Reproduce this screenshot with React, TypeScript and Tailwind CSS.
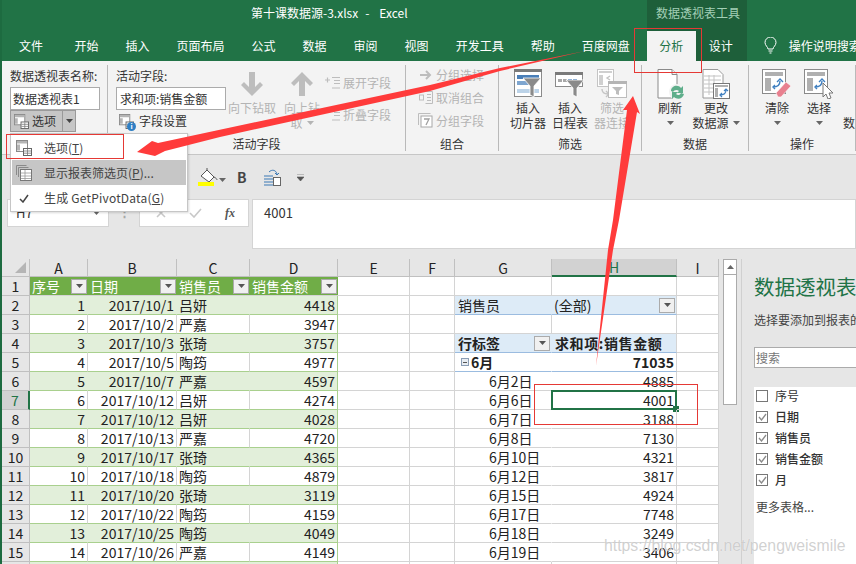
import React from "react";

const FONT = "[font-family:'Noto_Sans_CJK_SC','Noto_Sans',sans-serif]";

const TABS = ["开始", "插入", "页面布局", "公式", "数据", "审阅", "视图", "开发工具", "帮助", "百度网盘"];

const COLS = [
  { name: "A", w: "w-[58px]" },
  { name: "B", w: "w-[89px]" },
  { name: "C", w: "w-[73px]" },
  { name: "D", w: "w-[88px]" },
  { name: "E", w: "w-[72px]" },
  { name: "F", w: "w-[45px]" },
  { name: "G", w: "w-[97px]" },
  { name: "H", w: "w-[125px]" },
  { name: "I", w: "w-[42px]" },
];

const SALES: [string, string, string, string][] = [
  ["1", "2017/10/1", "吕妍", "4418"],
  ["2", "2017/10/2", "严嘉", "3947"],
  ["3", "2017/10/3", "张琦", "3757"],
  ["4", "2017/10/5", "陶筠", "4977"],
  ["5", "2017/10/7", "严嘉", "4597"],
  ["6", "2017/10/12", "吕妍", "4274"],
  ["7", "2017/10/12", "吕妍", "4028"],
  ["8", "2017/10/13", "严嘉", "4720"],
  ["9", "2017/10/17", "张琦", "4365"],
  ["10", "2017/10/18", "陶筠", "4879"],
  ["11", "2017/10/20", "张琦", "3119"],
  ["12", "2017/10/22", "陶筠", "4159"],
  ["13", "2017/10/25", "陶筠", "4049"],
  ["14", "2017/10/26", "严嘉", "4149"],
];

const PIVOT: [string, string][] = [
  ["6月2日", "4885"],
  ["6月6日", "4001"],
  ["6月7日", "3188"],
  ["6月8日", "7130"],
  ["6月10日", "4321"],
  ["6月12日", "3817"],
  ["6月15日", "4924"],
  ["6月17日", "7748"],
  ["6月18日", "3249"],
  ["6月19日", "3406"],
];

const FIELDS = [
  { name: "序号", on: false },
  { name: "日期", on: true },
  { name: "销售员", on: true },
  { name: "销售金额", on: true },
  { name: "月", on: true },
];

function TableIcon({ size = 16 }: { size?: number }) {
  return (
    <svg width={size} height={size} viewBox="0 0 16 16" className="shrink-0">
      <rect x="0.5" y="0.5" width="11" height="11" fill="#fff" stroke="#8a8a8a" />
      <path d="M1 1h10v2.5H1zM1 4.5h3v6H1z" fill="#b5b5b5" />
      <rect x="7.5" y="8.5" width="8" height="7" fill="#fff" stroke="#666" />
      <path d="M8 11h7M8 13.2h7M11.5 9v6" stroke="#777" strokeWidth="0.8" />
    </svg>
  );
}

function PagesIcon() {
  return (
    <svg width="16" height="16" viewBox="0 0 16 16" className="shrink-0">
      <path d="M.5 10V.5h10M2.500 12V2.500h10" fill="none" stroke="#8a8a8a" />
      <rect x="4.500" y="4.500" width="11" height="11" fill="#fff" stroke="#777" />
      <path d="M5 8h10M5 11h10M5 13.500h10M9 5v10" stroke="#999" strokeWidth="0.8" />
    </svg>
  );
}

function ArrowIcon({ up }: { up?: boolean }) {
  return (
    <svg width="24" height="26" viewBox="0 0 24 26">
      <path
        d={up ? "M12 1 23 12l-3 3-5-5v15H9V10l-5 5-3-3z" : "M12 25 23 14l-3-3-5 5V1H9v15l-5-5-3 3z"}
        fill="#bdbdbd"
      />
    </svg>
  );
}

function SlicerIcon() {
  return (
    <svg width="28" height="30" viewBox="0 0 28 30">
      <rect x="0.5" y="1.5" width="27" height="26" fill="#fff" stroke="#8a8a8a" />
      <rect x="0" y="0" width="28" height="3" fill="#7a7a7a" />
      <rect x="3" y="6" width="22" height="4" fill="#4a7fb8" />
      <rect x="3" y="12" width="13" height="4" fill="#7ea6d0" />
      <rect x="3" y="20" width="22" height="4" fill="#bcd3e8" />
      <path d="M9 9h18l-7 8v11l-4-2v-9z" fill="#8a8a8a" stroke="#fff" strokeWidth="0.8" />
    </svg>
  );
}

function TimelineIcon() {
  return (
    <svg width="30" height="30" viewBox="0 0 30 30">
      <rect x="0.5" y="3.5" width="27" height="14" fill="#fff" stroke="#8a8a8a" />
      <rect x="0" y="3" width="28" height="3" fill="#7a7a7a" />
      <rect x="3" y="10" width="4" height="3" fill="#a8a8a8" />
      <rect x="8" y="10" width="4" height="3" fill="#a8a8a8" />
      <rect x="13" y="10" width="4" height="3" fill="#4a7fb8" />
      <rect x="18" y="10" width="4" height="3" fill="#4a7fb8" />
      <path d="M11 11h18l-7 8v9l-4-2v-7z" fill="#8a8a8a" stroke="#fff" strokeWidth="0.8" />
    </svg>
  );
}

function ConnectionsIcon() {
  return (
    <svg width="30" height="30" viewBox="0 0 30 30">
      <rect x="0.5" y="0.5" width="16" height="17" fill="#fff" stroke="#c4c4c4" />
      <path d="M2 2h13v2H2zM2 6h4v10H2z" fill="#d0d0d0" />
      <path d="M13 7l-3 2 3 2M5 20c0 4 3 5 6 5M9 22l3 3-3 3" fill="none" stroke="#c4c4c4" strokeWidth="1.4" />
      <rect x="11.5" y="12.5" width="18" height="16" fill="#fff" stroke="#bdbdbd" />
      <rect x="11" y="12" width="19" height="3" fill="#b5b5b5" />
      <path d="M15 18h11l-4 4v4l-3-1v-3z" fill="#bdbdbd" />
    </svg>
  );
}

function RefreshIcon() {
  return (
    <svg width="30" height="32" viewBox="0 0 30 32">
      <path d="M3 1.500h14l5 5V30H3z" fill="#fff" stroke="#8a8a8a" />
      <path d="M17 1.500v5h5" fill="#f3f3f3" stroke="#8a8a8a" />
      <circle cx="22" cy="24" r="8" fill="#f3f3f3" />
      <path d="M16 23c0-5 7-7 10-3l2-2v7h-6l2-2c-2-2-5-1-6 1z" fill="#5fae8b" />
      <path d="M29 26c-1 5-7 6-10 3l-2 2v-7h6l-2 2c2 2 4 1 5-1z" fill="#5fae8b" />
    </svg>
  );
}

function SourceIcon() {
  return (
    <svg width="28" height="30" viewBox="0 0 28 30">
      <path d="M1 0.5h15l5 5V29H1z" fill="#fff" stroke="#9a9a9a" />
      <path d="M2 7h17M2 11h17M2 15h17M2 19h17M2 23h17M7 6v20M12 6v20" stroke="#c4c4c4" strokeWidth="1" />
      <rect x="11.5" y="14.5" width="16" height="15" fill="#fff" stroke="#777" />
      <path d="M13 16h13v2H13zM13 19h3v9h-3z" fill="#b0b0b0" />
      <path d="M18 26c4 0 6-2 6-5M22 22l2-2 2 2M20 24l-2 2 2 2" fill="none" stroke="#3f7fc0" strokeWidth="1.2" />
    </svg>
  );
}

function PivotArrowTable() {
  return (
    <>
      <rect x="0.5" y="0.5" width="23" height="24" fill="#fff" stroke="#8a8a8a" />
      <path d="M3 3h18v4H3zM3 9h6v13H3z" fill="#b0b0b0" />
      <path d="M11 18c5 0 7-3 7-6M15 13l3-3 3 3M13 16l-2 2 2 2" fill="none" stroke="#3f7fc0" strokeWidth="1.4" />
    </>
  );
}

function ClearIcon() {
  return (
    <svg width="30" height="30" viewBox="0 0 30 30">
      <PivotArrowTable />
      <path d="M14 24l10-11 5 4-10 11h-3z" fill="#e8808f" stroke="#fff" strokeWidth="0.6" />
    </svg>
  );
}

function SelectIcon() {
  return (
    <svg width="30" height="30" viewBox="0 0 30 30">
      <PivotArrowTable />
      <path d="M19 14v14l3-3 2 5 3-1-2-5h4z" fill="#fff" stroke="#777" strokeWidth="1" />
    </svg>
  );
}

function Caret({ color = "#666" }: { color?: string }) {
  return (
    <svg width="7" height="4" viewBox="0 0 7 4" className="inline-block shrink-0">
      <path d="M0 0h7L3.5 4z" fill={color} />
    </svg>
  );
}

function FilterButton() {
  return (
    <span className="flex h-[15px] w-[16px] shrink-0 items-center justify-center border border-[#ababab] bg-[#f0f0f0]">
      <Caret color="#555" />
    </span>
  );
}

function Group({ title, w, children }: { title: string; w: string; children: React.ReactNode }) {
  return (
    <div className={`flex h-[86px] shrink-0 flex-col border-r border-[#b9b9b9] ${w}`}>
      <div className="flex min-h-0 flex-1">{children}</div>
      <div className="h-[14px] text-center text-[12px] leading-[14px] whitespace-nowrap text-[#333]">{title}</div>
    </div>
  );
}

function BigButton({
  icon,
  lines,
  w,
  caret,
  disabled,
}: {
  icon: React.ReactNode;
  lines: React.ReactNode[];
  w: string;
  caret?: boolean;
  disabled?: boolean;
}) {
  return (
    <div className={`flex shrink-0 flex-col items-center ${w} ${disabled ? "text-[#b4b4b4]" : "text-[#333]"}`}>
      <div className="mt-[2px] flex h-[33px] items-center justify-center">{icon}</div>
      {lines.map((line, i) => (
        <div key={i} className="flex h-[15px] items-center gap-1 text-[12px] leading-[15px] whitespace-nowrap">
          {line}
        </div>
      ))}
      {caret && (
        <div className="flex h-[15px] items-center">
          <Caret />
        </div>
      )}
    </div>
  );
}

function SmallRow({ icon, label }: { icon: React.ReactNode; label: string }) {
  return (
    <div className="flex h-[23px] items-center gap-[3px] text-[12px] whitespace-nowrap text-[#b4b4b4]">
      <span className="flex w-[15px] justify-center">{icon}</span>
      {label}
    </div>
  );
}

function Ribbon() {
  return (
    <div className="flex h-[94px] items-start border-b border-[#c6c6c6] bg-[#f3f3f3] py-[4px]">
      <Group title="" w="w-[106px]">
        <div className="pl-[8px]">
          <div className="mt-[3px] text-[12px] leading-[15px] whitespace-nowrap text-[#333]">数据透视表名称:</div>
          <div className="mt-[4px] h-[23px] w-[90px] border border-[#ababab] bg-white pl-[2px] text-[12px] leading-[21px] text-[#333]">
            数据透视表1
          </div>
          <div className="flex">
            <div className="flex h-[22px] w-[53px] items-center gap-[3px] border border-[#9a9a9a] bg-[#c6c6c6] pl-[3px] text-[12px] text-[#333]">
              <TableIcon size={15} />
              选项
            </div>
            <div className="flex h-[22px] w-[13px] items-center justify-center border border-l-0 border-[#9a9a9a] bg-[#c6c6c6]">
              <Caret color="#444" />
            </div>
          </div>
        </div>
      </Group>
      <Group title="活动字段" w="w-[298px]">
        <div className="w-[118px] shrink-0 pl-[8px]">
          <div className="mt-[3px] text-[12px] leading-[15px] text-[#333]">活动字段:</div>
          <div className="mt-[4px] h-[23px] w-[110px] border border-[#ababab] bg-white pl-[3px] text-[12px] leading-[21px] whitespace-nowrap text-[#333]">
            求和项:销售金额
          </div>
          <div className="mt-[2px] flex items-center gap-[5px] pl-[3px] text-[12px] text-[#333]">
            <span className="relative">
              <TableIcon size={15} />
              <span className="absolute -right-[2px] -bottom-[2px] h-[9px] w-[9px] rounded-full bg-[#2f7fc4] text-center text-[7px] leading-[9px] font-bold text-white">
                i
              </span>
            </span>
            字段设置
          </div>
        </div>
        <BigButton w="w-[52px]" disabled icon={<ArrowIcon />} lines={["向下钻取"]} />
        <BigButton
          w="w-[48px]"
          disabled
          icon={<ArrowIcon up />}
          lines={["向上钻", <>取<Caret color="#b4b4b4" /></>]}
        />
        <div className="-ml-[1px] flex flex-col gap-[9px] pt-[6px]">
          <SmallRow
            label="展开字段"
            icon={
              <svg width="15" height="12" viewBox="0 0 15 12">
                <path d="M0 3h5M2.5 .5v5M7 .5h8M9 3.5h6M9 6.5h6M7 11h8" stroke="#bdbdbd" strokeWidth="1.2" />
              </svg>
            }
          />
          <SmallRow
            label="折叠字段"
            icon={
              <svg width="15" height="12" viewBox="0 0 15 12">
                <path d="M7 .5h8M9 3.5h6M9 6.5h6M7 11h8" stroke="#bdbdbd" strokeWidth="1.2" />
              </svg>
            }
          />
        </div>
      </Group>
      <Group title="组合" w="w-[93px]">
        <div className="-mt-[2px] pl-[12px]">
          <SmallRow
            label="分组选择"
            icon={
              <svg width="12" height="10" viewBox="0 0 12 10">
                <path d="M0 5h10M6 1l4 4-4 4" fill="none" stroke="#bdbdbd" strokeWidth="2" />
              </svg>
            }
          />
          <SmallRow
            label="取消组合"
            icon={
              <svg width="14" height="13" viewBox="0 0 14 13">
                <path d="M6.500.5h7v12h-7M8 3.500h4M8 6.500h4M8 9.500h4" fill="none" stroke="#bdbdbd" />
                <rect x="0.500" y="4" width="4" height="5" fill="none" stroke="#bdbdbd" />
              </svg>
            }
          />
          <SmallRow
            label="分组字段"
            icon={
              <svg width="15" height="15" viewBox="0 0 15 15">
                <path d="M.5 12V.5h12" fill="none" stroke="#bdbdbd" />
                <rect x="3" y="3" width="11" height="11" fill="#fff" stroke="#a8a8a8" />
                <path d="M6 6h5L8 12" fill="none" stroke="#a0a0a0" strokeWidth="1.3" />
              </svg>
            }
          />
        </div>
      </Group>
      <Group title="筛选" w="w-[143px]">
        <BigButton w="w-[42px] ml-[8px]" icon={<SlicerIcon />} lines={["插入", "切片器"]} />
        <BigButton w="w-[42px]" icon={<TimelineIcon />} lines={["插入", "日程表"]} />
        <BigButton w="w-[42px]" disabled icon={<ConnectionsIcon />} lines={["筛选", "器连接"]} />
      </Group>
      <Group title="数据" w="w-[107px]">
        <BigButton w="w-[36px] ml-[10px]" icon={<RefreshIcon />} lines={["刷新"]} caret />
        <BigButton w="w-[56px]" icon={<SourceIcon />} lines={["更改", <>数据源<Caret /></>]} />
      </Group>
      <Group title="操作" w="w-[107px]">
        <BigButton w="w-[42px] ml-[7px]" icon={<ClearIcon />} lines={["清除"]} caret />
        <BigButton w="w-[42px]" icon={<SelectIcon />} lines={["选择"]} caret />
        <div className="mt-[50px] ml-[3px] text-[12px] leading-[15px] whitespace-nowrap text-[#333]">数</div>
      </Group>
    </div>
  );
}

function Toolbars() {
  return (
    <div className="h-[104px] bg-[#e6e6e6]">
      <div className="flex h-[44px] items-center pl-[196px]">
        <svg width="24" height="20" viewBox="0 0 24 20">
          <path d="M3 9 9 3l7 7-5 5z" fill="#fff" stroke="#555" />
          <path d="M9 3V1M16 10c2 1 3 2 3 3" stroke="#555" fill="none" />
          <rect x="0" y="15" width="16" height="4" fill="#ffff00" />
        </svg>
        <span className="-ml-[3px]"><Caret /></span>
        <span className="ml-[11px] text-[14px] leading-[16px] font-bold text-[#444]">B</span>
        <svg width="18" height="18" viewBox="0 0 18 18" className="ml-[16px]">
          <path d="M1 8h9M1 11h9M1 14h9M1 17h9" stroke="#3a78b5" />
          <path d="M6 4c3-3 7-2 8 2M12 5l2 2 2-2" fill="none" stroke="#3a78b5" />
          <rect x="10.500" y="9.500" width="7" height="8" fill="#fff" stroke="#666" />
        </svg>
        <svg width="7" height="7" viewBox="0 0 7 7" className="ml-[16px]">
          <path d="M0 0h7M0 3h7L3.500 7z" fill="#555" stroke="#555" strokeWidth="0.6" />
        </svg>
      </div>
      <div className="flex items-start pl-[5px]">
        <div className="flex h-[28px] w-[102px] items-center justify-between border border-[#d4d4d4] bg-white px-[8px] text-[13px] text-[#333]">
          H7
          <Caret />
        </div>
        <div className="w-[30px] pt-[4px] text-center text-[13px] leading-[16px] font-bold text-[#a8a8a8]">⋮</div>
        <div className="flex h-[28px] w-[110px] items-center justify-between border border-[#d4d4d4] bg-white pr-[13px] pl-[16px] text-[#bdbdbd]">
          <svg width="10" height="10" viewBox="0 0 10 10">
            <path d="M1 1l8 8M9 1l-8 8" stroke="#c8c8c8" strokeWidth="1.6" />
          </svg>
          <svg width="13" height="10" viewBox="0 0 13 10">
            <path d="M1 5l4 4 7-8" fill="none" stroke="#c8c8c8" strokeWidth="1.6" />
          </svg>
          <span className="font-['Liberation_Serif',serif] text-[12px] font-bold text-[#555] italic">fx</span>
        </div>
        <div className="ml-[3px] h-[50px] flex-1 border border-[#d4d4d4] bg-white pt-[3px] pl-[11px] text-[13px] text-[#333]">4001</div>
      </div>
    </div>
  );
}

function Cell({ w, className = "", children }: { w: string; className?: string; children?: React.ReactNode }) {
  return (
    <div
      className={`relative flex h-[19px] shrink-0 items-center border-r border-b border-[#d4d4d4] px-[2px] text-[14px] leading-[18px] whitespace-nowrap text-[#222] ${w} ${className}`}
    >
      {children}
    </div>
  );
}

function Row({ index }: { index: number }) {
  const sale = index >= 2 && index <= 15 ? SALES[index - 2] : null;
  const pivot = index >= 6 && index <= 15 ? PIVOT[index - 6] : null;
  const inner =
    index % 2 === 0
      ? "border-b-[#a9d08e] border-r-[#e2efda] bg-[#e2efda]"
      : "border-b-[#a9d08e] border-r-[#d4d4d4]";
  const last = index % 2 === 0 ? "border-b-[#a9d08e] border-r-[#a9d08e] bg-[#e2efda]" : "border-b-[#a9d08e] border-r-[#a9d08e]";
  const selected = index === 7;

  return (
    <div className="flex">
      <div
        className={`flex h-[19px] w-[28px] shrink-0 items-center justify-center border-r border-b border-[#c0c0c0] text-[14px] leading-[18px] text-[#222] ${
          selected ? "border-r-2 border-r-[#217346] bg-[#d2d2d2] text-[#217346]" : "bg-[#e6e6e6]"
        }`}
      >
        {index}
      </div>
      {index === 1 ? (
        <>
          <Cell w="w-[58px]" className="justify-between border-r-0 bg-[#70ad47] pr-[1px] text-white">序号<FilterButton /></Cell>
          <Cell w="w-[89px]" className="justify-between border-r-0 bg-[#70ad47] pr-[1px] text-white">日期<FilterButton /></Cell>
          <Cell w="w-[73px]" className="justify-between border-r-0 bg-[#70ad47] pr-[1px] text-white">销售员<FilterButton /></Cell>
          <Cell w="w-[88px]" className="justify-between border-r-0 bg-[#70ad47] pr-[1px] text-white">销售金额<FilterButton /></Cell>
        </>
      ) : sale ? (
        <>
          <Cell w="w-[58px]" className={`justify-end ${inner}`}>{sale[0]}</Cell>
          <Cell w="w-[89px]" className={`justify-end ${inner}`}>{sale[1]}</Cell>
          <Cell w="w-[73px]" className={inner}>{sale[2]}</Cell>
          <Cell w="w-[88px]" className={`justify-end ${last}`}>{sale[3]}</Cell>
        </>
      ) : (
        <>
          <Cell w="w-[58px]" className={inner} />
          <Cell w="w-[89px]" className={inner} />
          <Cell w="w-[73px]" className={inner} />
          <Cell w="w-[88px]" className={last} />
        </>
      )}
      <Cell w="w-[72px]" />
      <Cell w="w-[45px]" />
      {index === 2 ? (
        <>
          <Cell w="w-[97px]" className="border-r-[#ddebf7] border-b-[#9bbce0] bg-[#ddebf7] pl-[3px]">销售员</Cell>
          <Cell w="w-[125px]" className="justify-between border-b-[#9bbce0] bg-[#ddebf7] pr-[1px]">(全部)<FilterButton /></Cell>
        </>
      ) : index === 4 ? (
        <>
          <Cell w="w-[97px]" className="justify-between border-r-[#ddebf7] border-b-[#9bbce0] bg-[#ddebf7] pr-[1px] pl-[3px] font-bold">行标签<FilterButton /></Cell>
          <Cell w="w-[125px]" className="border-b-[#9bbce0] bg-[#ddebf7] pl-[3px] font-bold tracking-[0.6px]">求和项:销售金额</Cell>
        </>
      ) : index === 5 ? (
        <>
          <Cell w="w-[97px]" className="gap-[2px] border-r-white border-b-[#9bbce0] pl-[6px] font-bold">
            <span className="flex h-[8px] w-[8px] items-center justify-center border border-[#8a9db5] bg-[#e8edf3]">
              <span className="h-px w-[4px] bg-[#555]" />
            </span>
            6月
          </Cell>
          <Cell w="w-[125px]" className="justify-end border-b-[#9bbce0] font-bold">71035</Cell>
        </>
      ) : pivot ? (
        <>
          <Cell w="w-[97px]" className="border-r-white pl-[34px]">{pivot[0]}</Cell>
          <Cell w="w-[125px]" className="justify-end">
            {pivot[1]}
            {selected && (
              <>
                <span className="absolute -top-px -right-px -bottom-[1px] -left-px border-2 border-[#217346]" />
                <span className="absolute -right-[3px] -bottom-[3px] h-[6px] w-[6px] bg-[#217346]" />
              </>
            )}
          </Cell>
        </>
      ) : (
        <>
          <Cell w="w-[97px]" />
          <Cell w="w-[125px]" />
        </>
      )}
      <Cell w="w-[42px]" />
    </div>
  );
}

function Sheet() {
  return (
    <div className="w-[717px] shrink-0 overflow-hidden bg-white">
      <div className="flex h-[18px] bg-[#e6e6e6]">
        <div className="relative w-[28px] shrink-0 border-r border-b border-[#c0c0c0]">
          <svg width="11" height="11" viewBox="0 0 11 11" className="absolute right-[3px] bottom-[3px]">
            <path d="M11 0v11H0z" fill="#b5b5b5" />
          </svg>
        </div>
        {COLS.map((c) => (
          <div
            key={c.name}
            className={`flex shrink-0 items-center justify-center border-r border-b border-[#c0c0c0] text-[14px] leading-[16px] ${c.w} ${
              c.name === "H" ? "border-b-2 border-b-[#217346] bg-[#d2d2d2] text-[#217346]" : "text-[#222]"
            }`}
          >
            {c.name}
          </div>
        ))}
      </div>
      {Array.from({ length: 16 }, (_, i) => (
        <Row key={i} index={i + 1} />
      ))}
    </div>
  );
}

function FieldPanel() {
  return (
    <div className="flex min-w-0 flex-1 flex-col overflow-hidden border-l border-[#d0d0d0] pl-[12px]">
      <div className="mt-[13px] text-[20.5px] leading-[28px] whitespace-nowrap text-[#217346]">数据透视表字段</div>
      <div className="mt-[12px] text-[12px] leading-[16px] whitespace-nowrap text-[#444]">选择要添加到报表的字段:</div>
      <div className="mt-[19px] h-[21px] w-[140px] shrink-0 border border-[#ababab] bg-white pl-[1px] text-[12px] leading-[19px] text-[#777]">
        搜索
      </div>
      <div className="mt-[19px] flex-1 bg-white pl-[2px]">
        <div className="-mt-[2px]">
          {FIELDS.map((f) => (
            <div key={f.name} className={`flex h-[21px] items-center gap-[7px] text-[12px] whitespace-nowrap text-[#333] ${f.on ? "font-medium" : ""}`}>
              <span className="flex h-[12px] w-[12px] shrink-0 items-center justify-center border border-[#777] bg-white">
                {f.on && (
                  <svg width="9" height="8" viewBox="0 0 9 8">
                    <path d="M1 4l2.500 3L8 1" fill="none" stroke="#8a8a8a" strokeWidth="1.3" />
                  </svg>
                )}
              </span>
              {f.name}
            </div>
          ))}
        </div>
        <div className="mt-[9px] text-[12px] leading-[16px] whitespace-nowrap text-[#444]">更多表格...</div>
      </div>
    </div>
  );
}

function MenuItem({ icon, active, children }: { icon: React.ReactNode; active?: boolean; children: React.ReactNode }) {
  return (
    <div className={`flex h-[25px] items-center text-[12px] whitespace-nowrap text-[#444] ${active ? "bg-[#c6c6c6]" : ""}`}>
      <span className="flex w-[32px] shrink-0 justify-start pl-[4px]">{icon}</span>
      {children}
    </div>
  );
}

export default function App() {
  return (
    <div className={`relative h-[564px] w-[856px] overflow-hidden border-l-2 border-[#1d6b40] bg-[#e6e6e6] ${FONT}`}>
      <div className="flex h-[30px] bg-[#217346] text-[12px] text-white">
        <div className="w-[645px] shrink-0 pt-[5px] pl-[249px] leading-[16px] whitespace-nowrap">
          第十课数据源-3.xlsx
          <span className="ml-[7px]">-</span>
          <span className="ml-[10px]">Excel</span>
        </div>
        <div className="w-[100px] shrink-0 bg-[#1e5f3a] pt-[5px] pl-[9px] leading-[16px] whitespace-nowrap text-[#a3cfb6]">数据透视表工具</div>
      </div>
      <div className="flex h-[31px] items-end bg-[#217346] text-[12px] whitespace-nowrap text-white">
        <div className="flex h-[31px] items-center pr-[18px] pl-[17px]">文件</div>
        {TABS.map((t) => (
          <div key={t} className="flex h-[31px] items-center px-[13.5px]">{t}</div>
        ))}
        <div className="ml-[3.5px] flex h-[31px] w-[100px] items-end bg-[#1e5f3a]">
          <div className="flex h-[30px] w-[49px] items-center justify-center bg-[#f3f3f3] text-[#217346]">分析</div>
          <div className="flex h-[31px] w-[51px] items-center pl-[13px]">设计</div>
        </div>
        <div className="flex h-[31px] items-center gap-[12px] pl-[17px]">
          <svg width="13" height="17" viewBox="0 0 13 17">
            <path d="M4 12c0-2-3-3.500-3-6.500a5.500 5.500 0 0 1 11 0c0 3-3 4.500-3 6.500zM4.500 14h4M5.500 16h2" fill="none" stroke="#fff" />
          </svg>
          操作说明搜索
        </div>
      </div>
      <Ribbon />
      <Toolbars />
      <div className="flex h-[305px]">
        <Sheet />
        <div className="ml-[4px] flex w-[14px] shrink-0 flex-col">
          <div className="flex h-[16px] items-center justify-center border border-[#ababab] bg-white">
            <svg width="7" height="4" viewBox="0 0 7 4">
              <path d="M0 4h7L3.500 0z" fill="#666" />
            </svg>
          </div>
          <div className="h-[130px] border border-t-0 border-[#ababab] bg-white" />
        </div>
        <div className="w-[4px] shrink-0" />
        <FieldPanel />
      </div>

      {/* dropdown from the 选项 button */}
      <div className="absolute top-[133px] left-[8px] w-[178px] border border-[#c6c6c6] bg-white px-px py-[1px] shadow-[1px_1px_2px_rgba(0,0,0,0.15)]">
        <MenuItem icon={<TableIcon />}>选项(<span className="underline">T</span>)</MenuItem>
        <MenuItem active icon={<PagesIcon />}>显示报表筛选页(<span className="underline">P</span>)...</MenuItem>
        <MenuItem
          icon={
            <svg width="10" height="9" viewBox="0 0 10 9" className="mt-[1px] ml-[3px]">
              <path d="M1 5l3 3 5-7" fill="none" stroke="#444" strokeWidth="1.5" />
            </svg>
          }
        >
          <span className="tracking-[0.2px]">生成 GetPivotData(<span className="underline">G</span>)</span>
        </MenuItem>
      </div>

      {/* red annotations drawn over the screenshot */}
      <div className="absolute top-[134px] left-[4px] h-[25px] w-[118px] border border-[#e53935]" />
      <div className="absolute top-[28px] left-[632px] h-[45px] w-[68px] border border-[#e53935]" />
      <div className="absolute top-[384px] left-[532px] h-[41px] w-[164px] border border-[#e53935]" />
      <svg width="856" height="564" viewBox="0 0 856 564" className="pointer-events-none absolute top-0 -left-[2px]">
        <polygon
          points="137,152 152,141 158,143 430,85 500,68 585,51 500,71 430,91 220,137 165,151 155,156"
          fill="#ff3b3b"
        />
        <polygon
          points="633,96 640,114 637,112 619,220 613,250 596,366 608,250 613,220 627,110 623,110"
          fill="#ff3b3b"
        />
      </svg>
      <div className="absolute top-[536px] left-[602px] font-['Liberation_Sans',sans-serif] text-[15.8px] leading-[20px] whitespace-nowrap text-[rgba(170,170,170,0.55)] [text-shadow:0_0_1px_rgba(255,255,255,0.9)]">
        https://blog.csdn.net/pengweismile
      </div>
    </div>
  );
}
